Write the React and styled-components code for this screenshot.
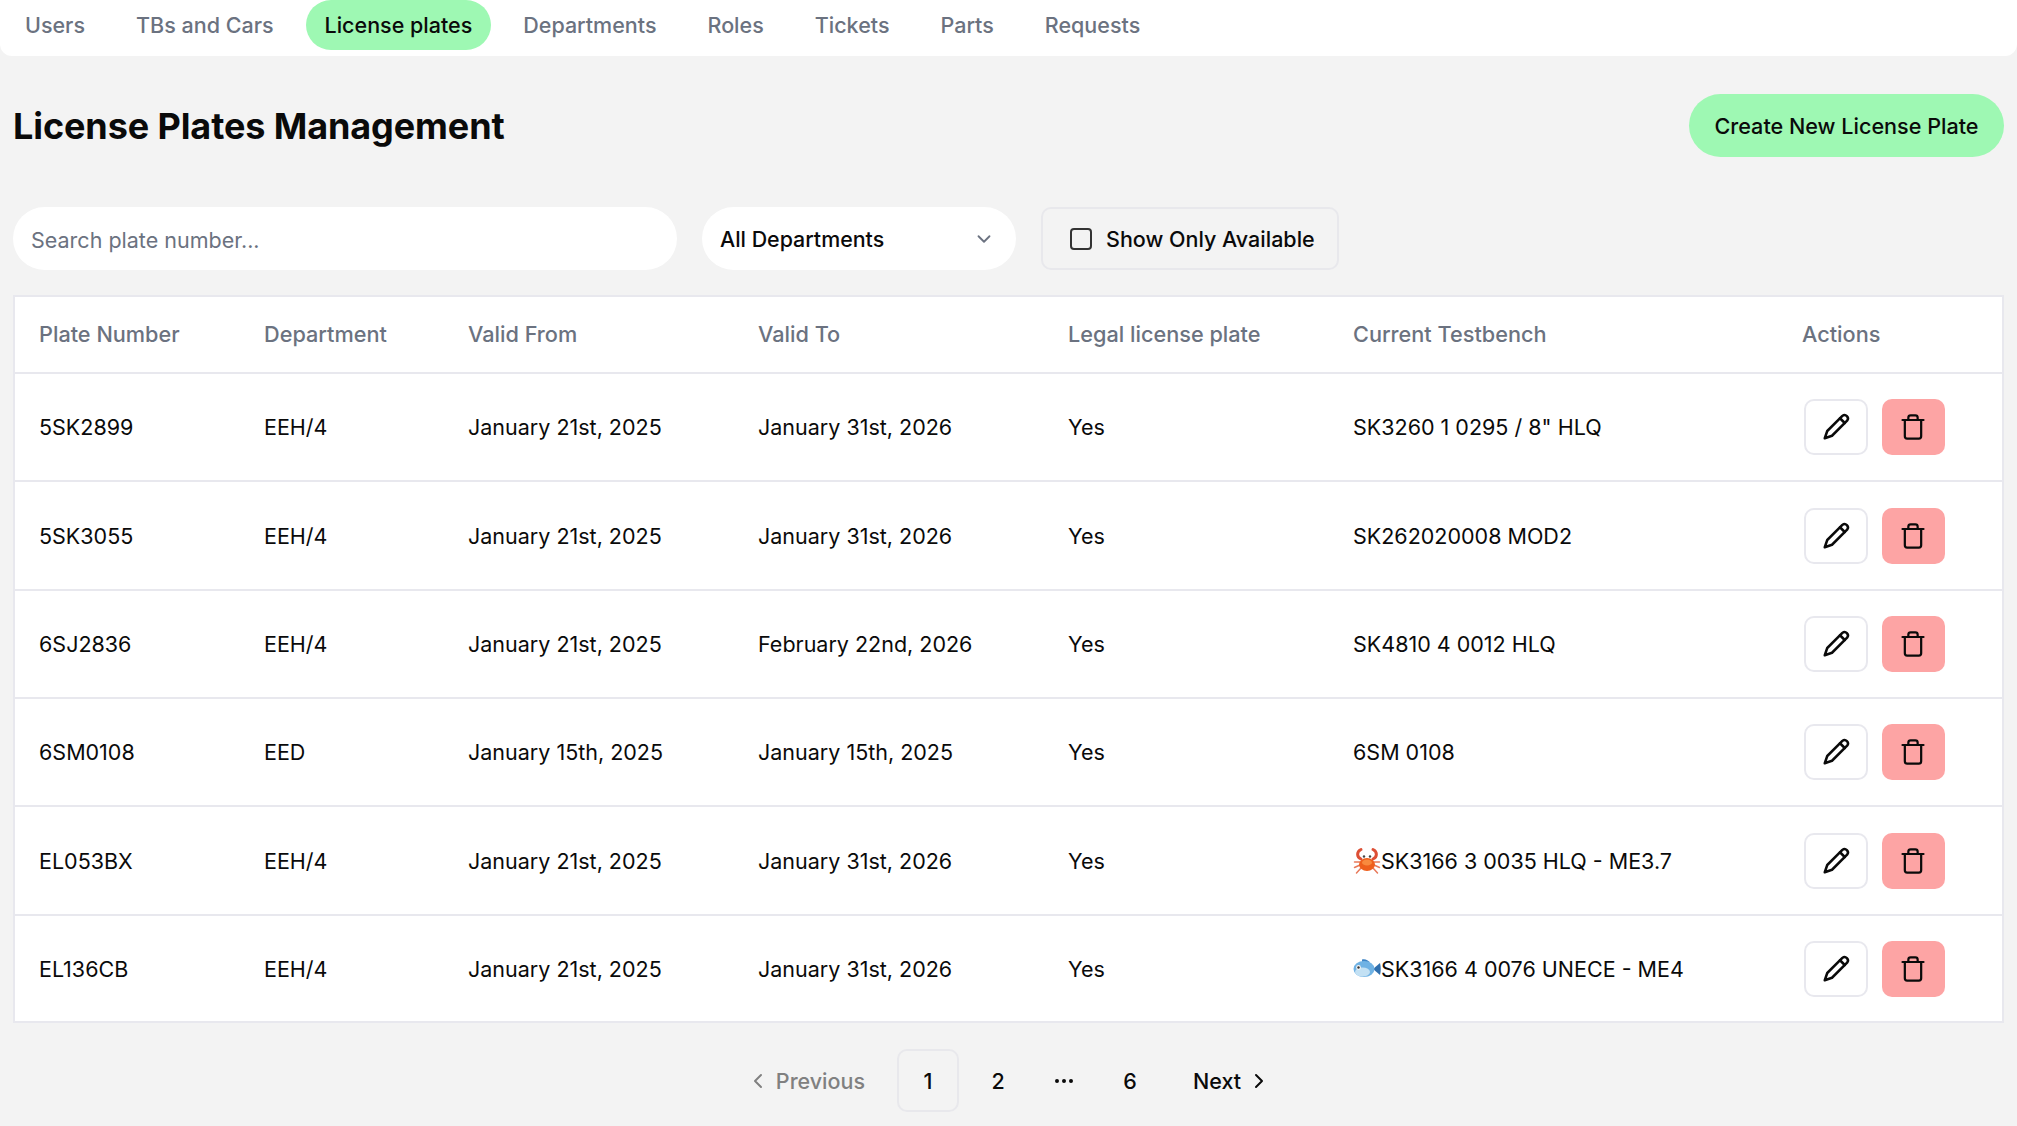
import React from 'react'
import styled, { createGlobalStyle } from 'styled-components'
import { ChevronDown, ChevronLeft, ChevronRight, Ellipsis, Trash } from 'lucide-react'

const GlobalStyle = createGlobalStyle`
  html, body {
    margin: 0;
    background: #f3f3f3;
    font-family: Inter, "Liberation Sans", sans-serif;
    color: #0a0a0a;
  }
  * { box-sizing: border-box; }
`

const Nav = styled.nav`
  height: 56px;
  padding-left: 6px;
  display: flex;
  align-items: flex-start;
  gap: 13px;
  background: #fff;
  border-radius: 0 0 12px 12px;
`

const NavItem = styled.a`
  height: 50px;
  padding: 0 19px;
  display: flex;
  align-items: center;
  font-size: 21.5px;
  font-weight: 500;
  border-radius: 25px;
  color: ${props => (props.$active ? '#0a0a0a' : '#6b7280')};
  background: ${props => (props.$active ? '#9ef8b3' : 'transparent')};
`

const Main = styled.main`
  padding: 38px 13px 0;
`

const TitleRow = styled.div`
  display: flex;
  justify-content: space-between;
  align-items: center;
`

const Title = styled.h1`
  margin: 0;
  font-size: 36px;
  font-weight: 700;
  letter-spacing: -0.1px;
`

const CreateButton = styled.button`
  height: 63px;
  width: 315px;
  padding: 0;
  border: 0;
  border-radius: 32px;
  background: #9ef8b3;
  font: 500 21.6px Inter, sans-serif;
  color: #0a0a0a;
`

const Filters = styled.div`
  margin-top: 50px;
  display: flex;
  gap: 25px;
  align-items: stretch;
  height: 63px;
`

const Search = styled.input`
  width: 664px;
  border: 0;
  outline: 0;
  padding: 2px 18px 0;
  border-radius: 32px;
  background: #fff;
  font: 400 21.5px Inter, sans-serif;
  &::placeholder { color: #6b7280; }
`

const Select = styled.div`
  width: 314px;
  padding: 0 21px 0 18px;
  display: flex;
  align-items: center;
  justify-content: space-between;
  border-radius: 32px;
  background: #fff;
  font-size: 21.4px;
  font-weight: 500;
  svg { color: #6b7280; }
`

const AvailableToggle = styled.label`
  width: 298px;
  padding: 0 0 0 27px;
  display: flex;
  align-items: center;
  gap: 14px;
  border: 2px solid #e8e8ec;
  border-radius: 10px;
  font-size: 21.5px;
  font-weight: 500;
  white-space: nowrap;
`

const CheckBox = styled.span`
  width: 22px;
  height: 22px;
  border: 2.5px solid #333;
  border-radius: 4px;
`

const TableCard = styled.table`
  margin-top: 25px;
  width: 1991px;
  table-layout: fixed;
  border-collapse: collapse;
  background: #fff;
  outline: 2px solid #e8e8ee;
  outline-offset: -2px;
`

const HeadCell = styled.th`
  height: 78px;
  padding: 0 0 0 26px;
  text-align: left;
  font-size: 21.7px;
  font-weight: 500;
  color: #6b7280;
`

const Row = styled.tr`
  height: 108.35px;
  border-top: 2px solid #e8e8ee;
`

const Cell = styled.td`
  padding: 0 0 0 26px;
  font-size: 21.5px;
  font-weight: 400;
  white-space: nowrap;
`

const BenchCell = styled.span`
  display: flex;
  align-items: center;
`

const Actions = styled.div`
  margin-left: 1.5px;
  display: flex;
  gap: 14px;
`

const IconButton = styled.button`
  width: ${props => (props.$danger ? '63px' : '64px')};
  height: 56px;
  display: flex;
  align-items: center;
  justify-content: center;
  padding: 0;
  border: ${props => (props.$danger ? '0' : '2px solid #e8e8ee')};
  border-radius: 10px;
  background: ${props => (props.$danger ? '#fda4a4' : '#fff')};
  color: #0a0a0a;
`

const Pagination = styled.div`
  margin-top: 26px;
  display: flex;
  justify-content: center;
  align-items: center;
  gap: 4px;
  font-size: 21.5px;
  font-weight: 500;
`

const PageStep = styled.span`
  height: 63px;
  padding: 0 ${props => (props.$disabled ? '28px 0 8px' : '8px 0 28px')};
  display: flex;
  align-items: center;
  gap: 6px;
  color: ${props => (props.$disabled ? '#808080' : '#0a0a0a')};
`

const PageLink = styled.span`
  width: 62px;
  height: 63px;
  margin-right: ${props => (props.$current ? '4px' : '0')};
  display: flex;
  align-items: center;
  justify-content: center;
  border: ${props => (props.$current ? '2px solid #e8e8ec' : '0')};
  border-radius: 10px;
`

const PencilIcon = () => (
  <svg width="30" height="30" viewBox="0 0 24 24" fill="none" stroke="currentColor" strokeWidth="2" strokeLinecap="round" strokeLinejoin="round">
    <path d="M17.1 3.1a2.7 2.7 0 0 1 3.8 3.8L8.8 19 3 21l2-5.8z" />
    <path d="m15.2 5 3.8 3.8" />
  </svg>
)

const CrabIcon = () => (
  <svg width="28" height="28" viewBox="0 0 28 28">
    <g fill="none" stroke="#e8795a" strokeWidth="1.5" strokeLinecap="round">
      <path d="M7 15H1.5M7 18l-5.5 2.5M8 21l-4.5 5M21 15h5.5M21 18l5.500 2.500M20 21l4.500 5" />
    </g>
    <g fill="none" stroke="#dd4f35" strokeWidth="3" strokeLinecap="round">
      <path d="M8 12C3.500 10 3.500 4.500 8 2.500M20 12c4.500-2 4.500-7.500 0-9.500" />
    </g>
    <ellipse cx="14" cy="17.500" rx="8" ry="6.500" fill="#ee5f1c" />
    <ellipse cx="14" cy="15.500" rx="5" ry="3" fill="#f88a3e" />
    <circle cx="11" cy="9.500" r="1.200" fill="#444" />
    <circle cx="17" cy="9.500" r="1.200" fill="#444" />
  </svg>
)

const FishIcon = () => (
  <svg width="28" height="22" viewBox="0 0 28 22">
    <path d="M20 11l7-6c1 4 1 8 0 12z" fill="#2f6fae" />
    <path d="M9 1.500c3-1 6 .5 8 3l-8 1z" fill="#3d83c4" />
    <ellipse cx="11" cy="11" rx="10.500" ry="8" fill="#6fb2e4" />
    <ellipse cx="9.500" cy="14" rx="7.500" ry="4.500" fill="#c3e1f4" />
    <circle cx="5.500" cy="9.500" r="2.400" fill="#f4f4f4" />
    <circle cx="5.500" cy="9.500" r="1.200" fill="#333" />
  </svg>
)

const columns = [225, 204, 290, 310, 285, 449, 228]
const headers = ['Plate Number', 'Department', 'Valid From', 'Valid To', 'Legal license plate', 'Current Testbench', 'Actions']

const plates = [
  { plate: '5SK2899', dept: 'EEH/4', from: 'January 21st, 2025', to: 'January 31st, 2026', bench: 'SK3260 1 0295 / 8" HLQ' },
  { plate: '5SK3055', dept: 'EEH/4', from: 'January 21st, 2025', to: 'January 31st, 2026', bench: 'SK262020008 MOD2' },
  { plate: '6SJ2836', dept: 'EEH/4', from: 'January 21st, 2025', to: 'February 22nd, 2026', bench: 'SK4810 4 0012 HLQ' },
  { plate: '6SM0108', dept: 'EED', from: 'January 15th, 2025', to: 'January 15th, 2025', bench: '6SM 0108' },
  { plate: 'EL053BX', dept: 'EEH/4', from: 'January 21st, 2025', to: 'January 31st, 2026', bench: 'SK3166 3 0035 HLQ - ME3.7', icon: <CrabIcon /> },
  { plate: 'EL136CB', dept: 'EEH/4', from: 'January 21st, 2025', to: 'January 31st, 2026', bench: 'SK3166 4 0076 UNECE - ME4', icon: <FishIcon /> },
]

const navItems = ['Users', 'TBs and Cars', 'License plates', 'Departments', 'Roles', 'Tickets', 'Parts', 'Requests']

const App = () => (
  <>
    <GlobalStyle />
    <Nav>
      {navItems.map(item => (
        <NavItem key={item} $active={item === 'License plates'}>{item}</NavItem>
      ))}
    </Nav>
    <Main>
      <TitleRow>
        <Title>License Plates Management</Title>
        <CreateButton>Create New License Plate</CreateButton>
      </TitleRow>
      <Filters>
        <Search placeholder="Search plate number..." />
        <Select>
          All Departments
          <ChevronDown size={22} />
        </Select>
        <AvailableToggle>
          <CheckBox />
          Show Only Available
        </AvailableToggle>
      </Filters>
      <TableCard>
        <colgroup>
          {columns.map((width, i) => <col key={i} width={width} />)}
        </colgroup>
        <thead>
          <tr>
            {headers.map(h => <HeadCell key={h}>{h}</HeadCell>)}
          </tr>
        </thead>
        <tbody>
          {plates.map(row => (
            <Row key={row.plate}>
              <Cell>{row.plate}</Cell>
              <Cell>{row.dept}</Cell>
              <Cell>{row.from}</Cell>
              <Cell>{row.to}</Cell>
              <Cell>Yes</Cell>
              <Cell>
                <BenchCell>{row.icon}{row.bench}</BenchCell>
              </Cell>
              <Cell>
                <Actions>
                  <IconButton><PencilIcon /></IconButton>
                  <IconButton $danger><Trash size={28} strokeWidth={1.9} /></IconButton>
                </Actions>
              </Cell>
            </Row>
          ))}
        </tbody>
      </TableCard>
      <Pagination>
        <PageStep $disabled><ChevronLeft size={24} />Previous</PageStep>
        <PageLink $current>1</PageLink>
        <PageLink>2</PageLink>
        <PageLink><Ellipsis size={24} /></PageLink>
        <PageLink>6</PageLink>
        <PageStep>Next<ChevronRight size={24} /></PageStep>
      </Pagination>
    </Main>
  </>
)

export default App
